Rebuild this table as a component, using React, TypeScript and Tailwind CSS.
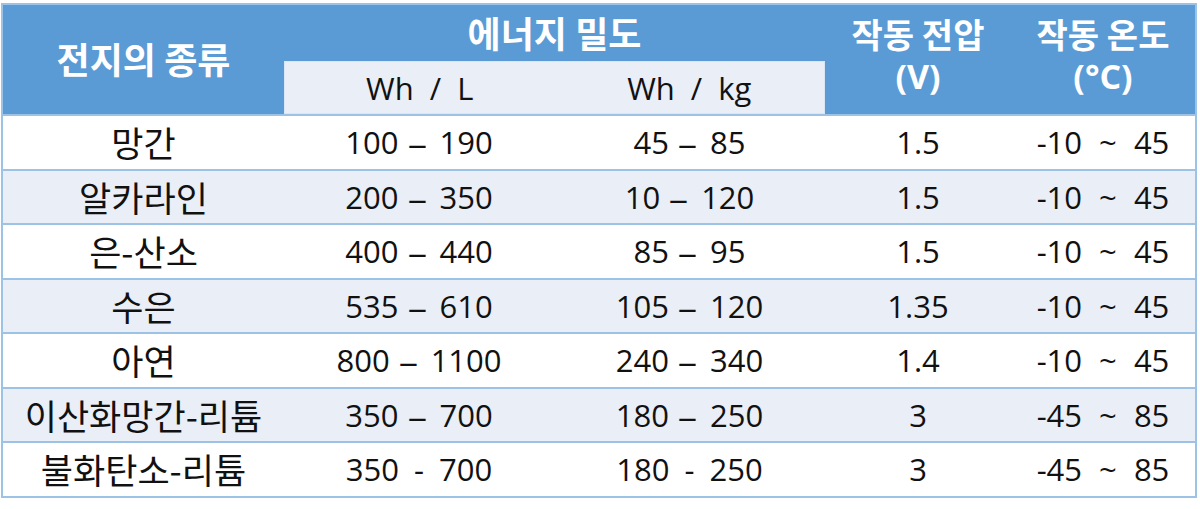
const kr = "font-['Noto_Sans_CJK_KR',sans-serif]";
const num = "font-['Open_Sans','Noto_Sans_CJK_KR',sans-serif]";

const rows: [string, string, string, string, string][] = [
  ["망간", "100 – 190", "45 – 85", "1.5", "-10 ~ 45"],
  ["알카라인", "200 – 350", "10 – 120", "1.5", "-10 ~ 45"],
  ["은-산소", "400 – 440", "85 – 95", "1.5", "-10 ~ 45"],
  ["수은", "535 – 610", "105 – 120", "1.35", "-10 ~ 45"],
  ["아연", "800 – 1100", "240 – 340", "1.4", "-10 ~ 45"],
  ["이산화망간-리튬", "350 – 700", "180 – 250", "3", "-45 ~ 85"],
  ["불화탄소-리튬", "350 - 700", "180 - 250", "3", "-45 ~ 85"],
];

const cols = "grid grid-cols-[281px_270px_271px_186px_1fr]";
const spacing = ["[word-spacing:7px]", "[word-spacing:7px]", "", "[word-spacing:9px]"];

// en dash in the source font is wider than Open Sans'
function Range({ text }: { text: string }) {
  const parts = text.split(" – ");
  if (parts.length < 2) return <>{text}</>;
  return (
    <span className="flex items-center gap-[11px]">
      <span>{parts[0]}</span>
      <span className="inline-block w-[19px] translate-y-[1px] scale-x-[1.25]">–</span>
      <span>{parts[1]}</span>
    </span>
  );
}

export default function App() {
  return (
    <div className="h-[509px] w-[1200px] bg-white pl-[1px] pt-[3px]">
      <div className="w-[1196px] border-2 border-[#9cc2e5]">
        <div className={`${cols} grid-rows-[56px_53px] bg-[#5b9bd5] text-white`}>
          <div className={`${kr} row-span-2 flex items-center justify-center pb-[4px] text-[36px] font-bold`}>
            전지의 종류
          </div>
          <div className={`${kr} col-span-2 flex items-center justify-center pb-[3px] text-[36px] font-bold`}>
            에너지 밀도
          </div>
          <div className={`${kr} row-span-2 flex flex-col items-center justify-center pb-[10px] text-[34px] font-bold leading-[43px]`}>
            <span>작동 전압</span>
            <span className={num}>(V)</span>
          </div>
          <div className={`${kr} row-span-2 flex flex-col items-center justify-center pb-[10px] text-[34px] font-bold leading-[43px]`}>
            <span>작동 온도</span>
            <span className={num}>(°C)</span>
          </div>
          <div className={`${num} col-span-2 grid grid-cols-2 border border-[#dbe6f4] bg-[#e9eef7] text-[31px] text-[#111] [word-spacing:8px]`}>
            <div className="flex items-center justify-center pt-[2px]">Wh / L</div>
            <div className="flex items-center justify-center pt-[2px]">Wh / kg</div>
          </div>
        </div>
        {rows.map((r, i) => (
          <div
            key={r[0]}
            className={`${cols} h-[54.5px] border-t-2 border-[#9cc2e5] text-[#111] ${i % 2 ? "bg-[#e9eef7]" : "bg-white"}`}
          >
            <div className={`${kr} flex items-center justify-center text-[35px]`}>{r[0]}</div>
            {r.slice(1).map((c, j) => (
              <div key={j} className={`${num} ${spacing[j]} flex items-center justify-center text-[31px]`}>
                <Range text={c} />
              </div>
            ))}
          </div>
        ))}
      </div>
    </div>
  );
}
